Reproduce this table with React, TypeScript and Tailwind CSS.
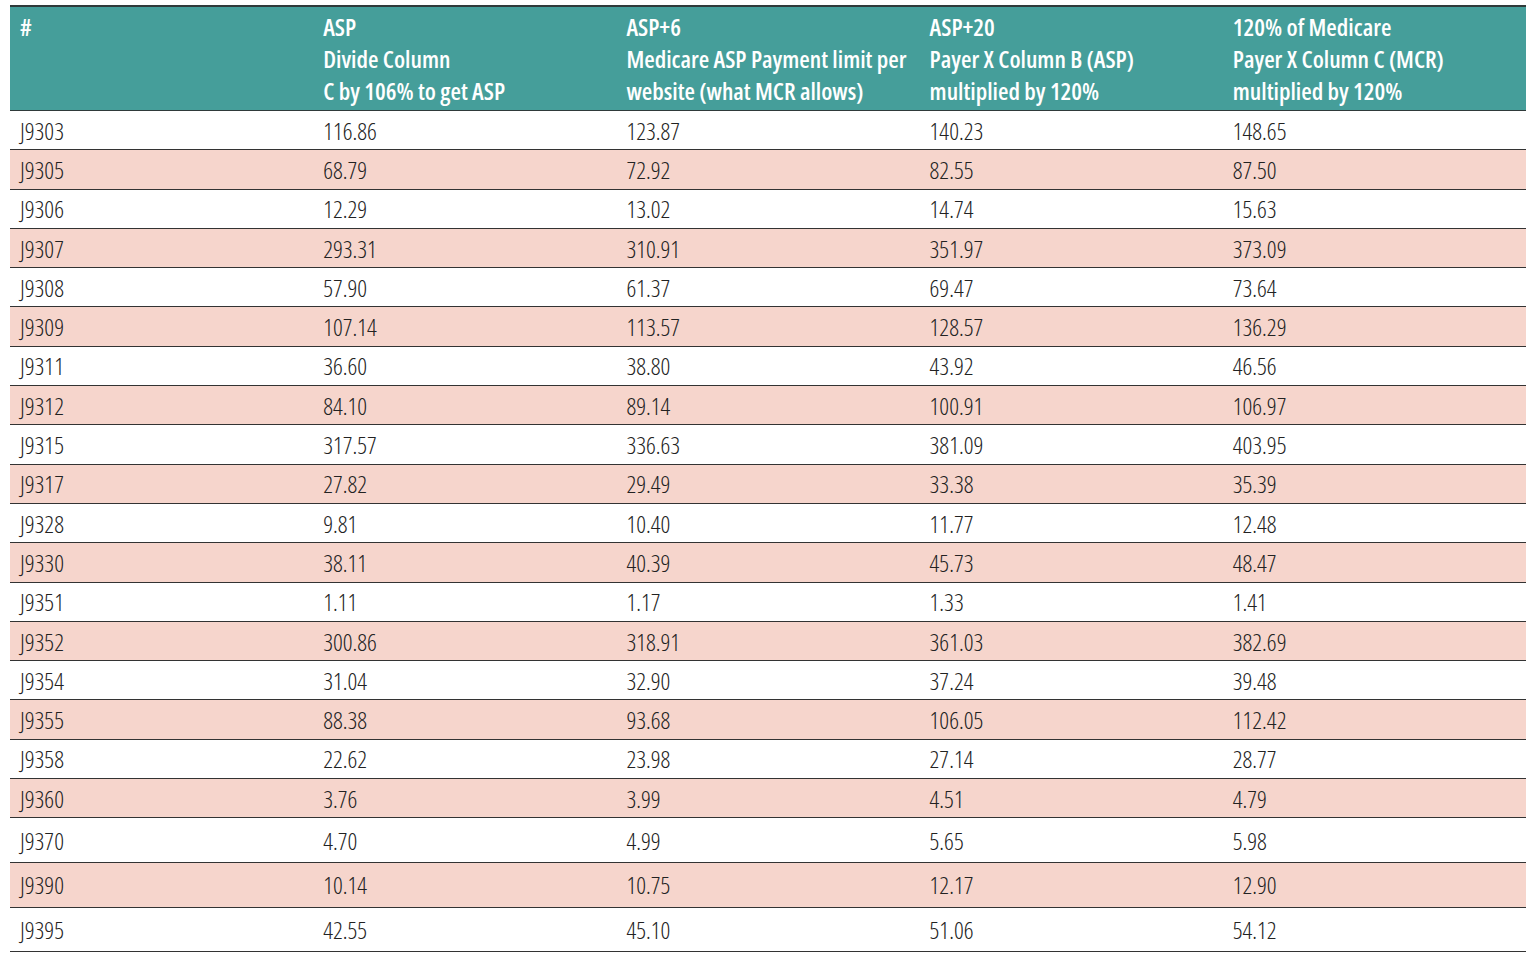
import React from 'react'

const rows: string[][] = [
  ['J9303', '116.86', '123.87', '140.23', '148.65'],
  ['J9305', '68.79', '72.92', '82.55', '87.50'],
  ['J9306', '12.29', '13.02', '14.74', '15.63'],
  ['J9307', '293.31', '310.91', '351.97', '373.09'],
  ['J9308', '57.90', '61.37', '69.47', '73.64'],
  ['J9309', '107.14', '113.57', '128.57', '136.29'],
  ['J9311', '36.60', '38.80', '43.92', '46.56'],
  ['J9312', '84.10', '89.14', '100.91', '106.97'],
  ['J9315', '317.57', '336.63', '381.09', '403.95'],
  ['J9317', '27.82', '29.49', '33.38', '35.39'],
  ['J9328', '9.81', '10.40', '11.77', '12.48'],
  ['J9330', '38.11', '40.39', '45.73', '48.47'],
  ['J9351', '1.11', '1.17', '1.33', '1.41'],
  ['J9352', '300.86', '318.91', '361.03', '382.69'],
  ['J9354', '31.04', '32.90', '37.24', '39.48'],
  ['J9355', '88.38', '93.68', '106.05', '112.42'],
  ['J9358', '22.62', '23.98', '27.14', '28.77'],
  ['J9360', '3.76', '3.99', '4.51', '4.79'],
  ['J9370', '4.70', '4.99', '5.65', '5.98'],
  ['J9390', '10.14', '10.75', '12.17', '12.90'],
  ['J9395', '42.55', '45.10', '51.06', '54.12'],
]

const headers: string[][] = [
  ['#'],
  ['ASP', 'Divide Column', 'C by 106% to get ASP'],
  ['ASP+6', 'Medicare ASP Payment limit per', 'website (what MCR allows)'],
  ['ASP+20', 'Payer X Column B (ASP)', 'multiplied by 120%'],
  ['120% of Medicare', 'Payer X Column C (MCR)', 'multiplied by 120%'],
]

export default function App() {
  return (
    <div className="min-h-[959px] bg-white pt-[5px] px-[10px] font-['Open_Sans',sans-serif] [font-stretch:condensed]">
      <div className="w-[1516px]">
        {/* Header */}
        <div className="grid grid-cols-5 h-[106px] bg-[#459e9a] border-t-2 border-b border-[#2f3a3a] pt-[4px] text-white font-semibold text-[24px] leading-[32px]">
          {headers.map((lines, i) => (
            <div key={i} className="pl-[10px] pr-2">
              {lines.map((l) => (
                <div key={l} className="whitespace-nowrap">{l}</div>
              ))}
            </div>
          ))}
        </div>

        {/* Rows */}
        {rows.map((r, idx) => (
          <div
            key={r[0]}
            className={
              'grid grid-cols-5 items-center border-b border-[#333] text-[24px] font-light text-[#222] ' +
              (idx % 2 === 1 ? 'bg-[#f6d5cc] ' : 'bg-white ') +
              (idx >= 18 ? 'h-[44.7px]' : 'h-[39.3px]')
            }
          >
            {r.map((c, j) => (
              <div key={j} className="pl-[10px] pt-[1px]">
                {c}
              </div>
            ))}
          </div>
        ))}
      </div>
    </div>
  )
}
